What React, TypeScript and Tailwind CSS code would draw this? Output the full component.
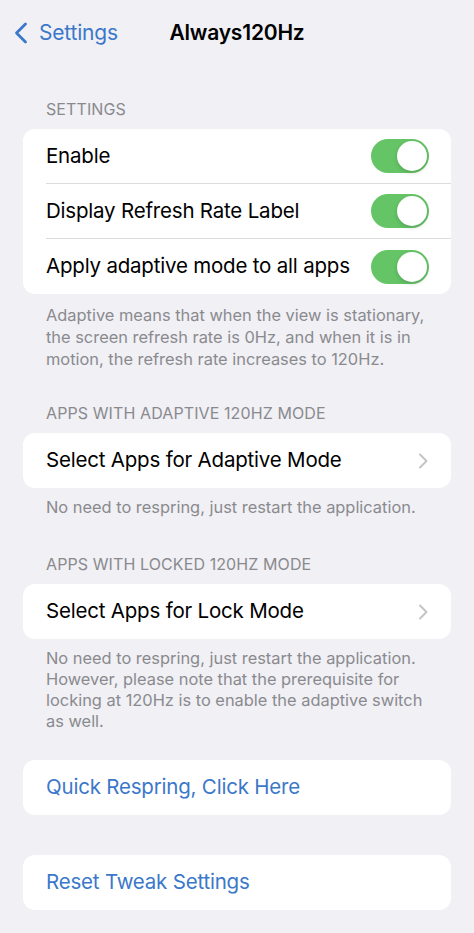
import { useState } from 'react'

const font = { fontFamily: 'Inter, "Noto Sans", sans-serif' }

function Toggle({ on, onChange }: { on: boolean; onChange: () => void }) {
  return (
    <button
      onClick={onChange}
      className={`relative flex h-[34px] w-[58px] shrink-0 items-center rounded-full p-[2px] transition-colors ${
        on ? 'justify-end bg-[#65c466]' : 'justify-start bg-[#e9e9eb]'
      }`}
    >
      <span className="h-[30px] w-[30px] rounded-full bg-white shadow-[0_2px_4px_rgba(0,0,0,0.15)]" />
    </button>
  )
}

function Chevron() {
  return (
    <svg className="h-[16px] w-[10px] text-[#c4c4c7]" viewBox="0 0 10 16" fill="none" stroke="currentColor">
      <path d="M2 1.5l6.5 6.5L2 14.5" strokeWidth={2} strokeLinecap="round" strokeLinejoin="round" />
    </svg>
  )
}

function Header({ children, className = '' }: { children: React.ReactNode; className?: string }) {
  return (
    <div className={`px-[46px] text-[16px] leading-[20px] tracking-[0.1px] text-[#8a8a8e] uppercase ${className}`}>
      {children}
    </div>
  )
}

function Footer({ children, className = '' }: { children: React.ReactNode; className?: string }) {
  return <p className={`pl-[46px] pr-[34px] text-[16.4px] text-[#8a8a8e] ${className}`}>{children}</p>
}

export default function App() {
  const [enable, setEnable] = useState(true)
  const [label, setLabel] = useState(true)
  const [adaptive, setAdaptive] = useState(true)

  const rows = [
    { title: 'Enable', on: enable, toggle: () => setEnable(!enable) },
    { title: 'Display Refresh Rate Label', on: label, toggle: () => setLabel(!label) },
    { title: 'Apply adaptive mode to all apps', on: adaptive, toggle: () => setAdaptive(!adaptive) },
  ]

  return (
    <div className="min-h-[933px] w-full bg-[#f0f0f5] pb-[22px] antialiased" style={font}>
      {/* ナビゲーションバー */}
      <header className="relative flex h-[66px] items-center">
        <button className="flex items-center pl-[14px] text-[#3b78c9]">
          <svg className="mr-[11px] h-[22px] w-[14px]" viewBox="0 0 14 22" fill="none" stroke="currentColor">
            <path d="M11.5 2L2.5 11l9 9" strokeWidth={2.8} strokeLinecap="round" strokeLinejoin="round" />
          </svg>
          <span className="text-[21px] tracking-[-0.2px]">Settings</span>
        </button>
        <h1 className="absolute left-1/2 -translate-x-1/2 text-[21px] font-semibold tracking-[-0.2px] text-black">
          Always120Hz
        </h1>
      </header>

      <main>
        <Header className="mt-[33px] mb-[10px]">Settings</Header>
        <div className="mx-[23px] overflow-hidden rounded-[12px] bg-white">
          {rows.map((row, i) => (
            <div key={row.title} className="flex h-[55px] pl-[23px]">
              <div
                className={`flex flex-1 items-center pr-[22px] ${
                  i < rows.length - 1 ? 'border-b border-[#dcdce0]' : ''
                }`}
              >
                <span className="flex-1 whitespace-nowrap text-[20.5px] tracking-[-0.2px] text-black">{row.title}</span>
                <Toggle on={row.on} onChange={row.toggle} />
              </div>
            </div>
          ))}
        </div>
        <Footer className="mt-[10px] leading-[22px]">
          Adaptive means that when the view is stationary, the screen refresh rate is 0Hz, and when it is in motion, the
          refresh rate increases to 120Hz.
        </Footer>

        <Header className="mt-[33px] mb-[10px]">Apps with adaptive 120Hz mode</Header>
        <div className="mx-[23px] flex h-[55px] items-center rounded-[12px] bg-white pl-[23px] pr-[23px]">
          <span className="flex-1 text-[20.5px] tracking-[-0.2px] text-black">Select Apps for Adaptive Mode</span>
          <Chevron />
        </div>
        <Footer className="mt-[9px] leading-[21px]">No need to respring, just restart the application.</Footer>

        <Header className="mt-[36px] mb-[10px]">Apps with locked 120Hz mode</Header>
        <div className="mx-[23px] flex h-[55px] items-center rounded-[12px] bg-white pl-[23px] pr-[23px]">
          <span className="flex-1 text-[20.5px] tracking-[-0.2px] text-black">Select Apps for Lock Mode</span>
          <Chevron />
        </div>
        <Footer className="mt-[9px] leading-[21px]">
          No need to respring, just restart the application. However, please note that the prerequisite for locking at
          120Hz is to enable the adaptive switch as well.
        </Footer>

        <button className="mx-[23px] mt-[28px] flex h-[55px] w-[428px] items-center rounded-[12px] bg-white pl-[23px] text-left text-[20.5px] tracking-[-0.2px] text-[#3b78c9]">
          Quick Respring, Click Here
        </button>
        <button className="mx-[23px] mt-[40px] flex h-[55px] w-[428px] items-center rounded-[12px] bg-white pl-[23px] text-left text-[20.5px] tracking-[-0.2px] text-[#3b78c9]">
          Reset Tweak Settings
        </button>
      </main>
    </div>
  )
}
